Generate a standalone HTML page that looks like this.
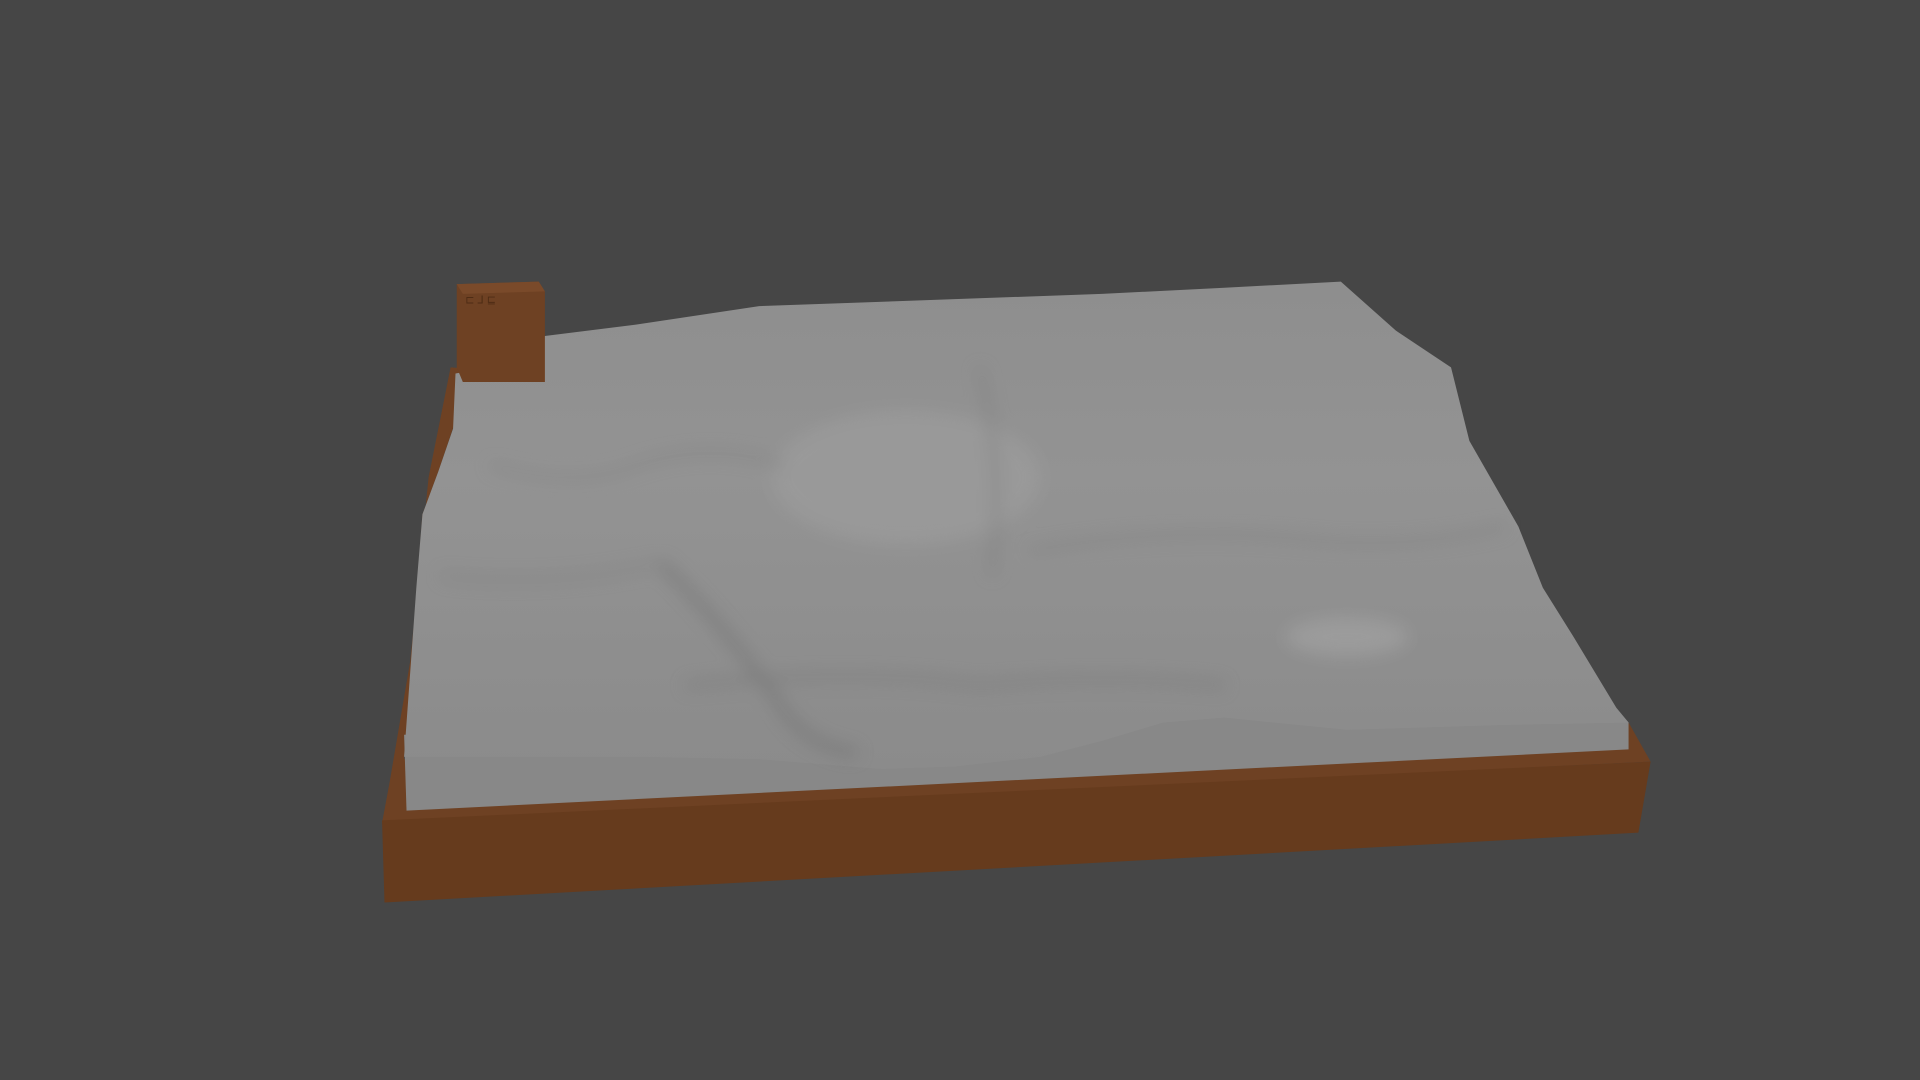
<!DOCTYPE html>
<html><head><meta charset="utf-8"><style>html,body{margin:0;padding:0;background:#464646;overflow:hidden}svg{display:block}</style></head>
<body>
<svg width="1920" height="1080" viewBox="0 0 1568 882" preserveAspectRatio="none" xmlns="http://www.w3.org/2000/svg">
<defs>
<linearGradient id="t" x1="0" y1="0" x2="0" y2="1">
<stop offset="0" stop-color="#8e8e8e"/><stop offset="0.4" stop-color="#939393"/><stop offset="1" stop-color="#8b8b8b"/>
</linearGradient>
<filter id="b"><feGaussianBlur stdDeviation="7"/></filter>
</defs>
<rect width="1568" height="882" fill="#464646"/>
<polygon points="368,300 440,305 380,320 358,385 345,420 330,620 1330,590 1348,622 312,672 318,640 335,540 350,390" fill="#6e4123"/>
<polygon points="312,670 1348,622 1338,680 314,737" fill="#663b1d"/>
<polygon points="330,600 1318,578 1330,590 1330,612 332,662" fill="#888888"/>
<polygon points="372,305 400,300 440,275 520,265 620,250 760,245 900,240 1000,235 1095,230 1140,270 1185,300 1200,360 1240,430 1260,480 1285,520 1320,578 1330,590 1230,592 1100,596 1000,586 950,590 900,605 850,618 780,626 720,628 620,620 520,618 330,618 340,480 345,420 358,385 370,350" fill="url(#t)"/>
<g filter="url(#b)" opacity="0.6">
<ellipse cx="740" cy="390" rx="110" ry="55" fill="#9e9e9e"/>
<ellipse cx="1100" cy="520" rx="50" ry="16" fill="#a4a4a4"/>
<path d="M540,460 Q600,520 640,580 Q660,610 700,615" stroke="#6e6e6e" stroke-width="7" fill="none"/>
<path d="M560,560 Q700,545 800,560 Q900,550 1000,560" stroke="#757575" stroke-width="5" fill="none"/>
<path d="M400,380 Q470,400 520,380 Q580,360 640,380" stroke="#7a7a7a" stroke-width="4" fill="none"/>
<path d="M800,300 Q820,380 810,470" stroke="#777" stroke-width="4" fill="none"/>
<path d="M840,450 Q950,430 1060,440 Q1150,450 1230,430" stroke="#7c7c7c" stroke-width="4" fill="none"/>
<path d="M360,470 Q450,480 540,460" stroke="#7c7c7c" stroke-width="4" fill="none"/>
</g>
<polygon points="373,232 440,230 445,238 445,312 378,312 373,300" fill="#6e4123"/>
<polygon points="373,232 440,230 445,238 378,240" fill="#7a4a2a"/>
<text x="380" y="248" font-family="Liberation Sans, sans-serif" font-size="9" fill="#4e2c14">⊏ ⅃ ⊑</text>
</svg>
</body></html>
